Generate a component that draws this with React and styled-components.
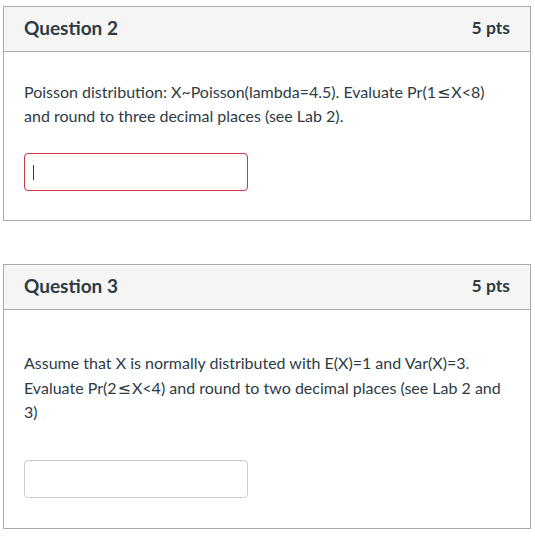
import React from 'react';
import styled, { createGlobalStyle } from 'styled-components';

const GlobalStyle = createGlobalStyle`
  body {
    margin: 0;
    background: #ffffff;
    font-family: Lato, "Liberation Sans", sans-serif;
    color: #2d3b45;
  }
`;

const Page = styled.div`
  padding: 6px 4px 0 3px;
  display: flex;
  flex-direction: column;
  gap: 43px;
`;

const Card = styled.div`
  width: 528px;
  box-sizing: border-box;
  border: 1px solid #aaaaaa;
  background: #ffffff;
`;

const Header = styled.div`
  height: 44px;
  box-sizing: content-box;
  background: #f5f5f5;
  border-bottom: 1px solid #aaaaaa;
  display: flex;
  align-items: center;
  justify-content: space-between;
  padding: 0 20px;
`;

const Title = styled.h2`
  margin: 0 0 3px;
  font-size: 19px;
  line-height: 24px;
  font-weight: 700;
  color: #2d3b45;
`;

const Points = styled.span`
  margin-bottom: 2px;
  font-size: 17.5px;
  line-height: 24px;
  font-weight: 700;
  color: #2d3b45;
`;

const Body = styled.div`
  padding: ${props => props.top}px 20px ${props => props.bottom}px 20px;
`;

const Text = styled.p`
  margin: 0;
  font-size: 16px;
  line-height: ${props => props.lh}px;
`;

// the less-or-equal sign comes from a wider fallback font in the original
const Sym = styled.span`
  font-family: "DejaVu Sans", sans-serif;
  font-size: 16px;
  line-height: 1;
  padding: 0 1px;
`;

const AnswerBox = styled.div`
  margin-top: ${props => props.gap}px;
  width: 224px;
  height: 38px;
  box-sizing: border-box;
  border: 1px solid ${props => (props.invalid ? '#c7393e' : '#c7cdd1')};
  border-radius: 4px;
  display: flex;
  align-items: center;
  padding-left: 8px;
`;

const Caret = styled.span`
  width: 1px;
  height: 15px;
  background: #2d3b45;
`;

function Question({ title, points, children, top, gap, bottom, lh, invalid }) {
  return (
    <Card>
      <Header>
        <Title>{title}</Title>
        <Points>{points}</Points>
      </Header>
      <Body top={top} bottom={bottom}>
        <Text lh={lh}>{children}</Text>
        <AnswerBox gap={gap} invalid={invalid}>
          {invalid && <Caret />}
        </AnswerBox>
      </Body>
    </Card>
  );
}

export default function App() {
  return (
    <>
      <GlobalStyle />
      <Page>
        <Question title="Question 2" points="5 pts" top={28} gap={25} bottom={29} lh={24} invalid>
          Poisson distribution: X~Poisson(lambda=4.5). Evaluate Pr(1<Sym>≤</Sym>X&lt;8) and
          round to three decimal places (see Lab 2).
        </Question>
        <Question title="Question 3" points="5 pts" top={41} gap={35} bottom={30} lh={24.5}>
          Assume that X is normally distributed with E(X)=1 and Var(X)=3. Evaluate
          Pr(2<Sym>≤</Sym>X&lt;4) and round to two decimal places (see Lab 2 and 3)
        </Question>
      </Page>
    </>
  );
}
